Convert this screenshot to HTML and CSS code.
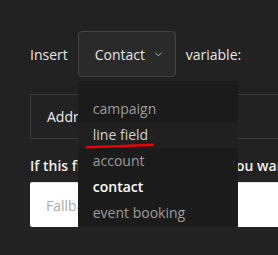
FILE: index.html
```html
<!DOCTYPE html>
<html lang="en">
<head>
    <meta charset="UTF-8">
    <meta name="viewport" content="width=device-width, initial-scale=1.0">
    <title>Insert variable</title>
    <link rel="stylesheet" href="styles.css">
</head>
<body>
    <div class="panel">
        <div class="insert-row">
            <span>Insert</span>
            <div class="picker">
                <button class="picker-btn">Contact
                    <svg class="chevron" width="9" height="5" viewBox="0 0 9 5"><path d="M0.5 0.5 L4.5 4 L8.5 0.5" fill="none" stroke="#ddd" stroke-width="1"/></svg>
                </button>
                <ul class="menu">
                    <li>campaign</li>
                    <li class="hover">line field
                        <svg class="mark" width="70" height="6" viewBox="0 0 70 6"><path d="M1 4.2 Q30 3.6 67 1.8" fill="none" stroke="#e8000b" stroke-width="2.4" stroke-linecap="round"/></svg>
                    </li>
                    <li>account</li>
                    <li class="active">contact</li>
                    <li>event booking</li>
                </ul>
            </div>
            <span>variable:</span>
        </div>
        <div class="field">Address</div>
        <label class="hint">If this field is empty, what do you want to show?</label>
        <input class="fallback" type="text" placeholder="Fallback value">
    </div>
</body>
</html>
```

FILE: styles.css
```css
body {
    margin: 0;
    background: #222222;
    font-family: "Open Sans", sans-serif;
    font-size: 14px;
    color: #e6e6e6;
    overflow: hidden;
}
.panel {
    width: 420px;
    padding: 31px 0 0 30px;
}
.insert-row {
    display: flex;
    align-items: center;
    gap: 10px;
    margin-bottom: 17px;
}
.picker {
    position: relative;
}
.picker-btn {
    display: flex;
    align-items: center;
    gap: 10px;
    height: 46px;
    width: 98px;
    padding: 0 13px 0 16px;
    background: #2a2a2a;
    border: 1px solid #444;
    border-radius: 4px;
    color: #e6e6e6;
    font-family: inherit;
    font-size: 14px;
}
.chevron {
    margin-top: 1px;
}
.menu {
    position: absolute;
    top: 50px;
    left: 0;
    z-index: 2;
    width: 160px;
    margin: 0;
    padding: 15px 0;
    list-style: none;
    background: #1b1b1b;
    border-radius: 3px;
}
.menu li {
    position: relative;
    height: 26px;
    line-height: 26px;
    padding-left: 15px;
    color: #9b9b9b;
}
.menu li.hover {
    background: #202020;
    color: #d2d2d2;
}
.menu li.active {
    color: #fff;
    font-weight: 600;
}
.mark {
    position: absolute;
    left: 8px;
    top: 21px;
}
.field {
    height: 43px;
    line-height: 43px;
    padding-left: 16px;
    border: 1px solid #3a3a3a;
    color: #eee;
}
.hint {
    display: block;
    margin-top: 17px;
    line-height: 20px;
    font-weight: 600;
    color: #f0f0f0;
}
.fallback {
    display: block;
    box-sizing: border-box;
    width: 100%;
    height: 45px;
    margin-top: 6px;
    padding: 0 16px;
    border: 0;
    border-top: 1px solid #e2e2e2;
    border-radius: 2px;
    background: #fff;
    font-family: inherit;
    font-size: 14px;
}
.fallback::placeholder {
    color: #aaa;
}
```
